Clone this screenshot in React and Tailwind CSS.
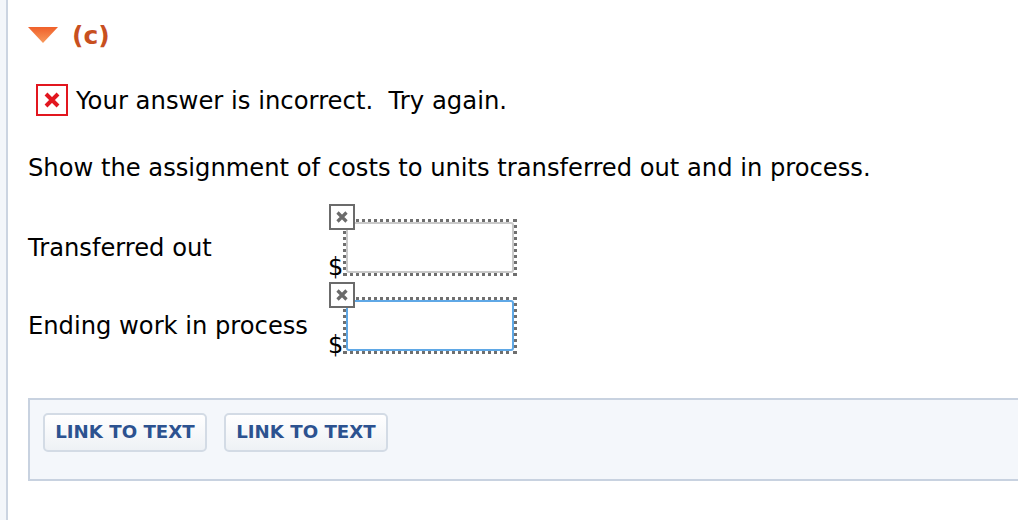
import React from "react";

function Field({ blue }) {
  return (
    <div className="relative w-[190px] h-[73px] shrink-0">
      <div className="absolute left-[15px] top-[15px] w-[174px] h-[57px] border-[3px] border-dotted border-[#6f6f6f]">
        <div
          className={
            "w-full h-full rounded-[3px] bg-white border-2 " +
            (blue ? "border-[#5fa8e6]" : "border-[#c9c9c9]")
          }
        />
      </div>
      <div className="absolute left-[1px] top-0 w-[26px] h-[26px] border-2 border-[#6b6b6b] bg-white flex items-center justify-center">
        <svg width="14" height="14" viewBox="0 0 14 14">
          <path d="M2.5 2.5 L11.5 11.5 M11.5 2.5 L2.5 11.5" stroke="#6b6b6b" strokeWidth="3.2" strokeLinecap="butt" />
        </svg>
      </div>
      <div className="absolute left-0 bottom-[-3px] text-[24px] leading-[26px] text-black">$</div>
    </div>
  );
}

export default function App() {
  return (
    <div
      className="w-[1018px] h-[520px] bg-white flex overflow-hidden text-black"
      style={{ fontFamily: '"DejaVu Sans", Verdana, sans-serif' }}
    >
      <div className="w-[6px] h-full bg-[#f3f6fa] shrink-0" />
      <div className="w-[2px] h-full bg-[#cbd4e1] shrink-0" />
      <div className="flex-1 pl-[20px] pt-[20px] flex flex-col min-w-0">
        <div className="h-[30px] flex items-center">
          <svg width="30" height="16" viewBox="0 0 30 16" className="shrink-0">
            <defs>
              <linearGradient id="tri" x1="0" y1="0" x2="0" y2="1">
                <stop offset="0" stopColor="#f0602a" />
                <stop offset="1" stopColor="#f89a5c" />
              </linearGradient>
            </defs>
            <path d="M0 0 L30 0 L15 16 Z" fill="url(#tri)" />
          </svg>
          <span className="ml-[14px] text-[25px] font-bold text-[#c8501f] leading-none">(c)</span>
        </div>

        <div className="mt-[34px] h-[32px] flex items-center">
          <div className="ml-[8px] w-[32px] h-[32px] border-2 border-[#e2161f] bg-white flex items-center justify-center shrink-0">
            <svg width="18" height="18" viewBox="0 0 18 18">
              <path d="M3 3 L15 15 M15 3 L3 15" stroke="#e2161f" strokeWidth="4" />
            </svg>
          </div>
          <span className="ml-[8px] pt-[2px] text-[24.3px] leading-none whitespace-pre">Your answer is incorrect.  Try again.</span>
        </div>

        <div className="mt-[38px] h-[28px] flex items-center text-[24.2px] leading-none whitespace-nowrap">
          Show the assignment of costs to units transferred out and in process.
        </div>

        <div className="mt-[22px] flex flex-col gap-[5px]">
          <div className="flex items-center">
            <div className="w-[300px] text-[24.2px] leading-none pt-[15px]">Transferred out</div>
            <Field />
          </div>
          <div className="flex items-center">
            <div className="w-[300px] text-[24.2px] leading-none pt-[16px]">Ending work in process</div>
            <Field blue />
          </div>
        </div>

        <div className="mt-[43px] h-[83px] w-[1010px] border-2 border-[#c8d2e0] bg-[#f4f7fb] pl-[13px] pt-[13px] flex gap-[17px] items-start">
          <button className="w-[164px] h-[39px] rounded-[5px] border-2 border-[#d3dbe5] bg-gradient-to-b from-white to-[#eef1f5] text-[#2c5290] font-bold text-[18.2px] leading-none">
            LINK TO TEXT
          </button>
          <button className="w-[164px] h-[39px] rounded-[5px] border-2 border-[#d3dbe5] bg-gradient-to-b from-white to-[#eef1f5] text-[#2c5290] font-bold text-[18.2px] leading-none">
            LINK TO TEXT
          </button>
        </div>
      </div>
    </div>
  );
}
